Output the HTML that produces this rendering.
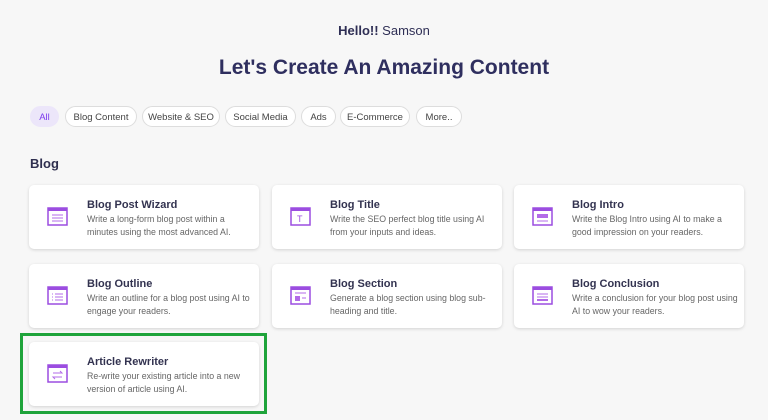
<!DOCTYPE html><html><head><style>
body{margin:0;width:768px;height:420px;background:#f7f7f7;font-family:"Liberation Sans",sans-serif;position:relative;overflow:hidden}
.hello{position:absolute;top:23px;width:100%;text-align:center;font-size:13px;color:#2f2f55}
.title{position:absolute;top:56px;width:100%;text-align:center;font-size:21px;font-weight:bold;color:#2f2f5f}
.pill{position:absolute;top:106px;height:21px;border:1px solid #ddd;border-radius:11px;background:#fff;font-size:9.5px;color:#444;line-height:21px;text-align:center;box-sizing:border-box}
.blog{position:absolute;left:30px;top:156px;font-size:13px;font-weight:bold;color:#2f2f4f}
.card{position:absolute;width:230px;height:64px;background:#fff;border-radius:5px;box-shadow:0 1px 3px rgba(0,0,0,.15)}
.card h3{position:absolute;left:58px;top:14px;margin:0;font-size:11px;font-weight:bold;color:#333350}
.card p{position:absolute;left:58px;top:28px;margin:0;font-size:8.8px;line-height:12.5px;color:#666;width:168px}
.card svg{position:absolute;left:18px;top:22px}
.g{position:absolute;left:20px;top:333px;width:241px;height:75px;border:3px solid #1fa43b}
</style></head><body>
<div class="hello"><b>Hello!!</b> Samson</div>
<div class="title">Let's Create An Amazing Content</div>
<div class="pill" style="left:30px;width:29px;background:#ece6fa;border-color:#ece6fa;color:#7c3aed">All</div>
<div class="pill" style="left:65px;width:72px">Blog Content</div>
<div class="pill" style="left:142px;width:78px">Website &amp; SEO</div>
<div class="pill" style="left:225px;width:71px">Social Media</div>
<div class="pill" style="left:301px;width:35px">Ads</div>
<div class="pill" style="left:340px;width:70px">E-Commerce</div>
<div class="pill" style="left:416px;width:46px">More..</div>
<div class="blog">Blog</div>
<div class="card" style="left:29px;top:185px"><svg width="21" height="20"><rect x="1" y="1" width="19" height="17" fill="none" stroke="#9b4de0" stroke-width="1.5"/><rect x="1" y="1" width="19" height="3" fill="#9b4de0"/><path d="M5 8h11M5 11h11M5 14h11" stroke="#b36be8"/></svg><h3>Blog Post Wizard</h3><p>Write a long-form blog post within a minutes using the most advanced AI.</p></div>
<div class="card" style="left:272px;top:185px"><svg width="21" height="20"><rect x="1" y="1" width="19" height="17" fill="none" stroke="#9b4de0" stroke-width="1.5"/><rect x="1" y="1" width="19" height="3" fill="#9b4de0"/><text x="7" y="15" font-size="9" fill="#9b4de0" font-family="Liberation Sans">T</text></svg><h3>Blog Title</h3><p>Write the SEO perfect blog title using AI from your inputs and ideas.</p></div>
<div class="card" style="left:514px;top:185px"><svg width="21" height="20"><rect x="1" y="1" width="19" height="17" fill="none" stroke="#9b4de0" stroke-width="1.5"/><rect x="1" y="1" width="19" height="3" fill="#9b4de0"/><rect x="5" y="7" width="11" height="4" fill="#b36be8"/><path d="M5 14h11" stroke="#b36be8"/></svg><h3>Blog Intro</h3><p>Write the Blog Intro using AI to make a good impression on your readers.</p></div>
<div class="card" style="left:29px;top:264px"><svg width="21" height="20"><rect x="1" y="1" width="19" height="17" fill="none" stroke="#9b4de0" stroke-width="1.5"/><rect x="1" y="1" width="19" height="3" fill="#9b4de0"/><path d="M5 8h1M8 8h8M5 11h1M8 11h8M5 14h1M8 14h8" stroke="#b36be8"/></svg><h3>Blog Outline</h3><p>Write an outline for a blog post using AI to engage your readers.</p></div>
<div class="card" style="left:272px;top:264px"><svg width="21" height="20"><rect x="1" y="1" width="19" height="17" fill="none" stroke="#9b4de0" stroke-width="1.5"/><rect x="1" y="1" width="19" height="3" fill="#9b4de0"/><rect x="5" y="10" width="5" height="5" fill="#b36be8"/><path d="M5 7h11M12 12h4" stroke="#b36be8"/></svg><h3>Blog Section</h3><p>Generate a blog section using blog sub-heading and title.</p></div>
<div class="card" style="left:514px;top:264px"><svg width="21" height="20"><rect x="1" y="1" width="19" height="17" fill="none" stroke="#9b4de0" stroke-width="1.5"/><rect x="1" y="1" width="19" height="3" fill="#9b4de0"/><path d="M5 8h11M5 11h11" stroke="#b36be8"/><rect x="5" y="13" width="11" height="2" fill="#b36be8"/></svg><h3>Blog Conclusion</h3><p>Write a conclusion for your blog post using AI to wow your readers.</p></div>
<div class="card" style="left:29px;top:342px"><svg width="21" height="20"><rect x="1" y="1" width="19" height="17" fill="none" stroke="#9b4de0" stroke-width="1.5"/><rect x="1" y="1" width="19" height="3" fill="#9b4de0"/><path d="M6 9h9l-2-2M15 13H6l2 2" stroke="#b36be8" fill="none"/></svg><h3>Article Rewriter</h3><p>Re-write your existing article into a new version of article using AI.</p></div>
<div class="g"></div>
</body></html>
